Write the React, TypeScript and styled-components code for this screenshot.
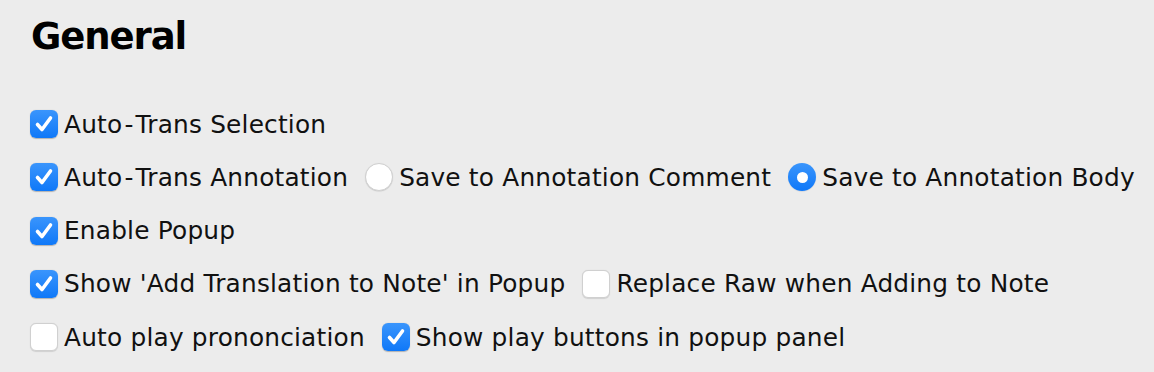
import React from "react";
import styled, { createGlobalStyle } from "styled-components";

const GlobalStyle = createGlobalStyle`
  html, body {
    margin: 0;
    padding: 0;
    background: #ececec;
  }
  body {
    font-family: "DejaVu Sans", "Liberation Sans", sans-serif;
    color: #111;
  }
`;

const Page = styled.div`
  padding: 15px 30px 0 30px;
  width: 1154px;
  height: 372px;
  box-sizing: border-box;
`;

const Heading = styled.h1`
  margin: 0 0 49px 1px;
  font-size: 37px;
  font-weight: bold;
  line-height: 44px;
  letter-spacing: -1.1px;
  color: #000;
`;

const Options = styled.div`
  display: flex;
  flex-direction: column;
  gap: 21.3px;
`;

const Row = styled.div`
  display: flex;
  align-items: center;
  gap: 17px;
  height: 32px;
`;

const Item = styled.label`
  display: flex;
  align-items: center;
  gap: 6px;
  font-size: 24.8px;
  letter-spacing: 0.2px;
  white-space: nowrap;
`;

const Dash = styled.span`
  display: inline-block;
  margin: 0 2px;
`;

const Box = styled.span<{ $checked?: boolean }>`
  width: 28px;
  height: 28px;
  box-sizing: border-box;
  border-radius: 6px;
  display: flex;
  align-items: center;
  justify-content: center;
  flex-shrink: 0;
  background: ${(p) =>
    p.$checked ? "linear-gradient(#3a95fc, #0f78f8)" : "#ffffff"};
  border: ${(p) => (p.$checked ? "none" : "1px solid #d0d0d0")};
  box-shadow: ${(p) =>
    p.$checked ? "0 0.5px 1px rgba(0,0,0,0.25)" : "0 0.5px 1px rgba(0,0,0,0.12)"};
`;

const Radio = styled.span<{ $checked?: boolean }>`
  width: 28px;
  height: 28px;
  box-sizing: border-box;
  border-radius: 50%;
  display: flex;
  align-items: center;
  justify-content: center;
  flex-shrink: 0;
  background: ${(p) =>
    p.$checked ? "linear-gradient(#3a95fc, #0f78f8)" : "#ffffff"};
  border: ${(p) => (p.$checked ? "none" : "1px solid #d0d0d0")};
  box-shadow: 0 0.5px 1px rgba(0, 0, 0, 0.15);
`;

const Dot = styled.span`
  width: 11px;
  height: 11px;
  border-radius: 50%;
  background: #fff;
`;

const Check = () => (
  <svg width="22" height="22" viewBox="0 0 22 22">
    <path
      d="M4.5 11.5 L9 16.5 L17.5 5"
      fill="none"
      stroke="#fff"
      strokeWidth="3.6"
      strokeLinecap="round"
      strokeLinejoin="round"
    />
  </svg>
);

// Lucida-style hyphen sits wider than DejaVu's, so pad it a little
const renderLabel = (label: string) => {
  const parts = label.split("-");
  return parts.map((part, i) => (
    <React.Fragment key={i}>
      {i > 0 && <Dash>-</Dash>}
      {part}
    </React.Fragment>
  ));
};

const CheckItem = ({ label, checked }: { label: string; checked?: boolean }) => (
  <Item>
    <Box $checked={checked}>{checked && <Check />}</Box>
    <span>{renderLabel(label)}</span>
  </Item>
);

const RadioItem = ({ label, checked }: { label: string; checked?: boolean }) => (
  <Item>
    <Radio $checked={checked}>{checked && <Dot />}</Radio>
    <span>{label}</span>
  </Item>
);

export default function App() {
  return (
    <>
      <GlobalStyle />
      <Page>
        <Heading>General</Heading>
        <Options>
          <Row>
            <CheckItem label="Auto-Trans Selection" checked />
          </Row>
          <Row>
            <CheckItem label="Auto-Trans Annotation" checked />
            <RadioItem label="Save to Annotation Comment" />
            <RadioItem label="Save to Annotation Body" checked />
          </Row>
          <Row>
            <CheckItem label="Enable Popup" checked />
          </Row>
          <Row>
            <CheckItem label="Show 'Add Translation to Note' in Popup" checked />
            <CheckItem label="Replace Raw when Adding to Note" />
          </Row>
          <Row>
            <CheckItem label="Auto play prononciation" />
            <CheckItem label="Show play buttons in popup panel" checked />
          </Row>
        </Options>
      </Page>
    </>
  );
}
